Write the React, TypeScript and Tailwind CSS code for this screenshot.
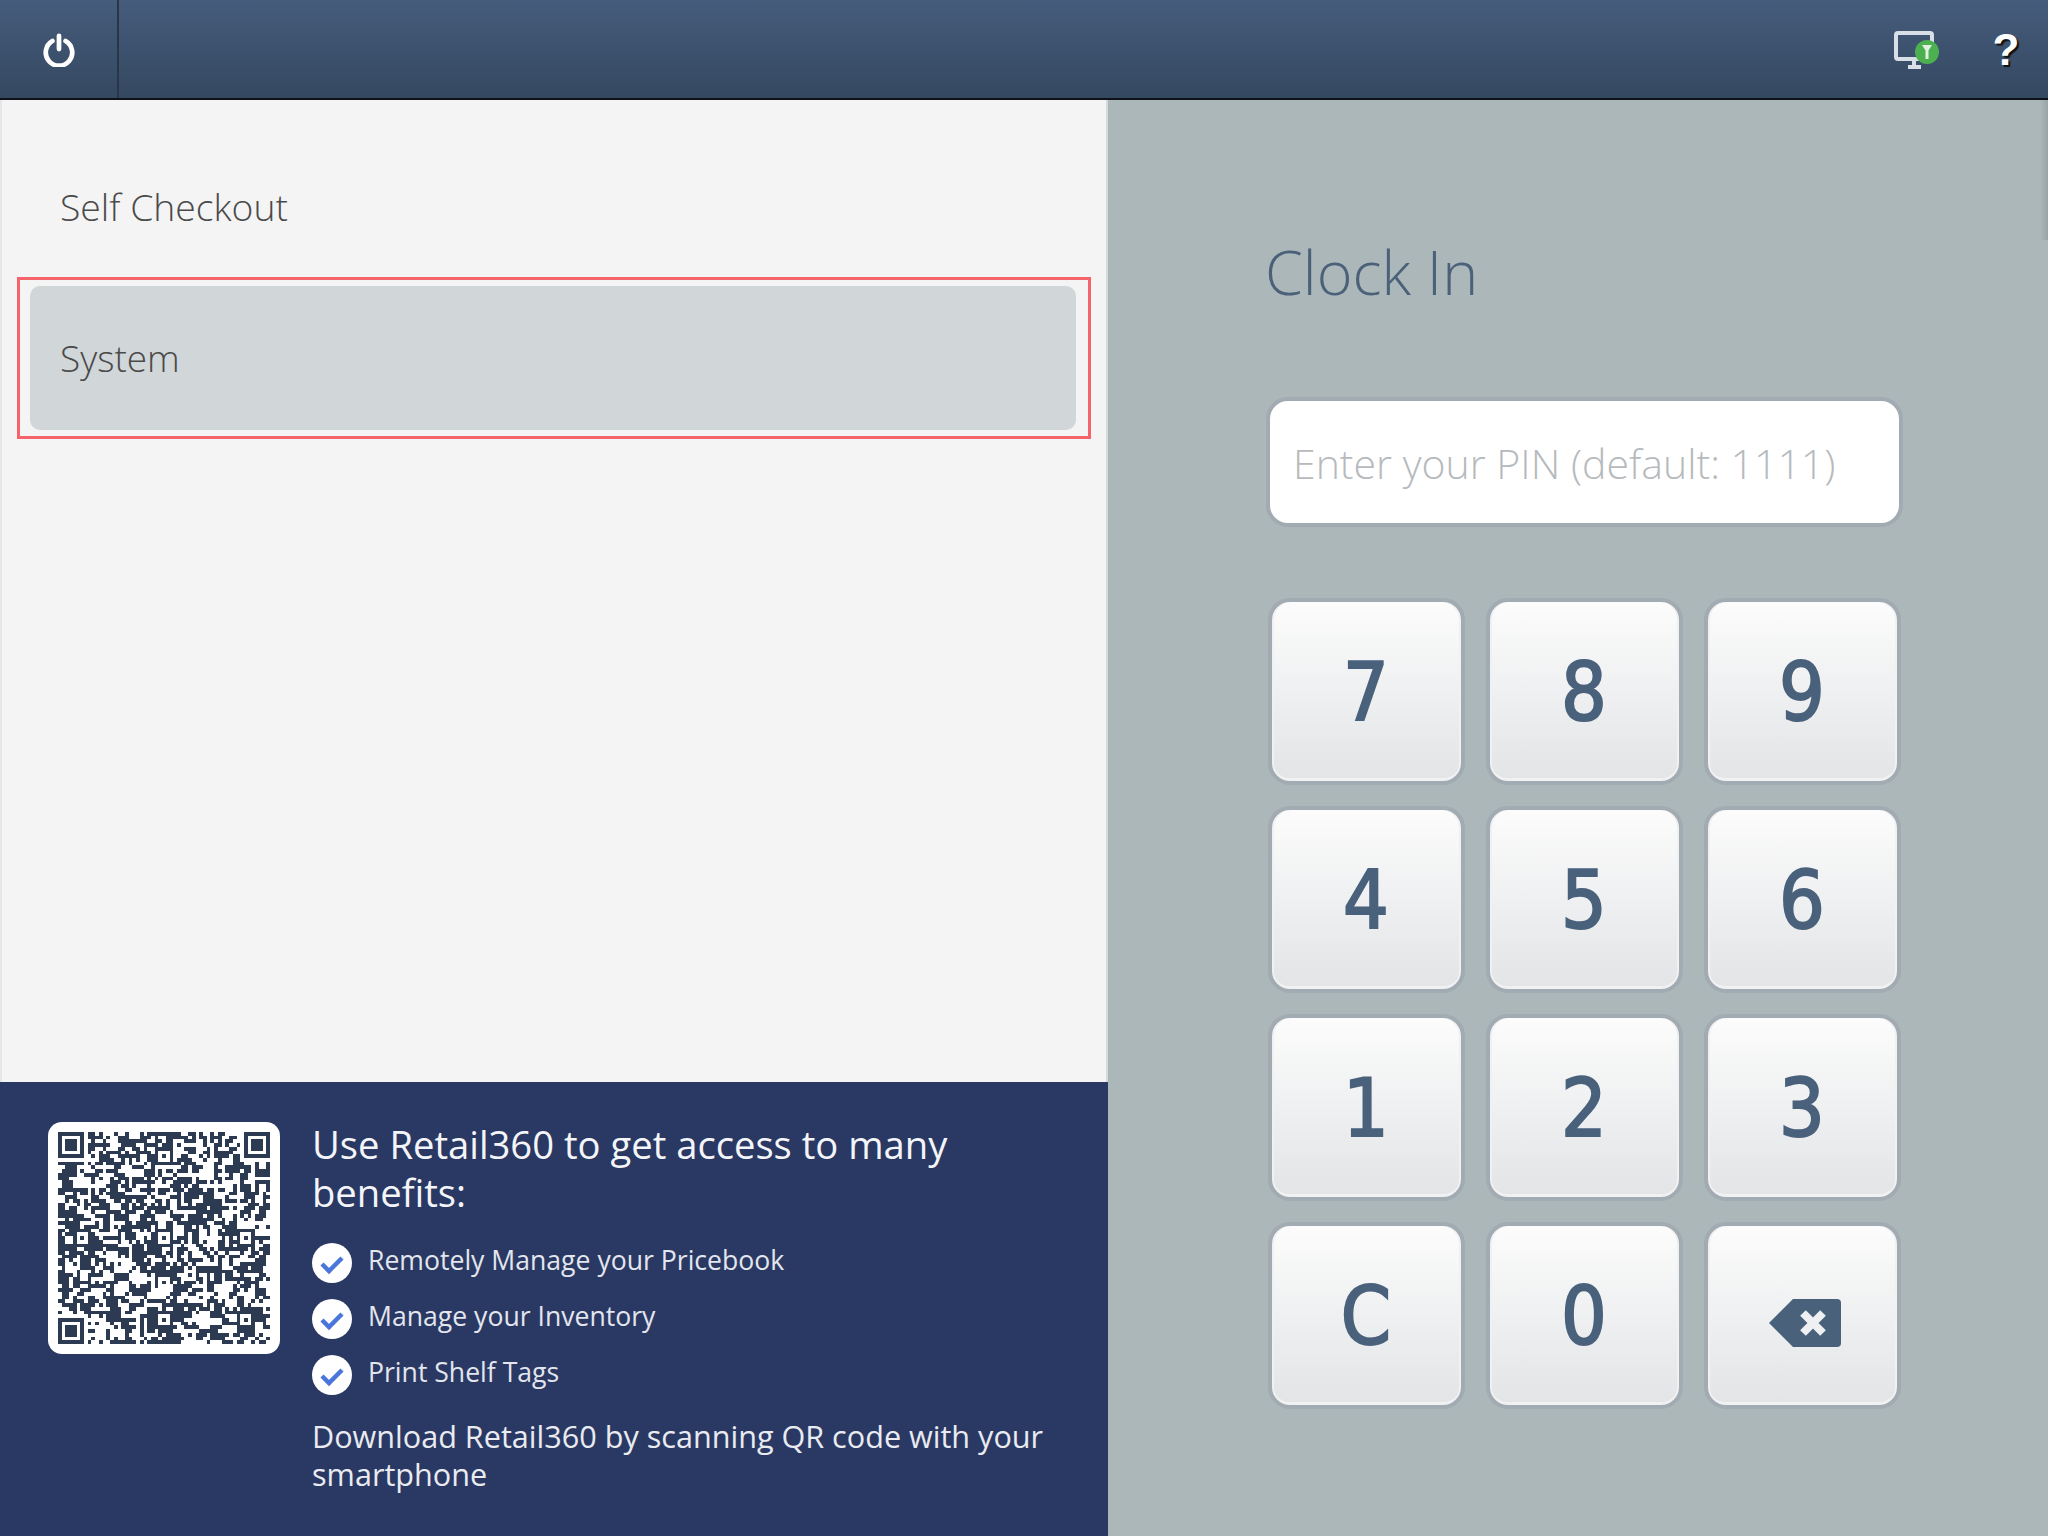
import React from "react";

const FONT = "font-['Open_Sans','Noto_Sans',sans-serif]";

function buildQr() {
  const n = 57;
  const g: number[][] = Array.from({ length: n }, () => Array(n).fill(0));
  let s = 12345;
  const rnd = () => {
    s = (s * 1103515245 + 12345) & 0x7fffffff;
    return (s >> 16) % 100;
  };
  for (let y = 0; y < n; y++)
    for (let x = 0; x < n; x++) {
      const r = rnd();
      if (r < 14 && x > 0) g[y][x] = g[y][x - 1];
      else if (r < 28 && y > 0) g[y][x] = g[y - 1][x];
      else g[y][x] = rnd() < 54 ? 1 : 0;
    }
  const finder = (ox: number, oy: number) => {
    for (let y = -1; y < 8; y++)
      for (let x = -1; x < 8; x++) {
        const yy = oy + y, xx = ox + x;
        if (yy < 0 || xx < 0 || yy >= n || xx >= n) continue;
        const inside = x >= 0 && x < 7 && y >= 0 && y < 7;
        const ring = x === 0 || x === 6 || y === 0 || y === 6;
        const core = x >= 2 && x <= 4 && y >= 2 && y <= 4;
        g[yy][xx] = inside && (ring || core) ? 1 : 0;
      }
  };
  finder(0, 0); finder(n - 7, 0); finder(0, n - 7);
  const align = (cx: number, cy: number) => {
    for (let y = -2; y <= 2; y++)
      for (let x = -2; x <= 2; x++)
        g[cy + y][cx + x] = Math.max(Math.abs(x), Math.abs(y)) !== 1 ? 1 : 0;
  };
  [[28, 6], [6, 28], [28, 28], [50, 28], [28, 50], [50, 50]].forEach(([x, y]) => align(x, y));
  let d = "";
  g.forEach((row, y) => row.forEach((v, x) => { if (v) d += `M${x} ${y}h1v1h-1z`; }));
  return d;
}
const qrPath = buildQr();

function Check() {
  return (
    <svg width="40" height="40" viewBox="0 0 40 40" className="shrink-0">
      <circle cx="20" cy="20" r="20" fill="#ffffff" />
      <path d="M10 21l7 7 13-13" fill="none" stroke="#4a76dc" strokeWidth="4.5" />
    </svg>
  );
}

function Key({ label, children }: { label?: string; children?: React.ReactNode }) {
  return (
    <div className="h-[187px] w-[197px] rounded-[22px] border-[4px] border-[#a2abb2] bg-gradient-to-b from-[#fcfcfc] to-[#e2e4e6] flex items-center justify-center shadow-[inset_0_-3px_0_#f0f1f2,inset_2px_0_0_#f0f1f2,inset_-2px_0_0_#f0f1f2]">
      {label ? (
        <span className="mt-[3px] -ml-[1px] text-[#4a617c] text-[80px] font-normal font-['DejaVu_Sans_Condensed','DejaVu_Sans',sans-serif] [-webkit-text-stroke:2px_#4a617c]">
          {label}
        </span>
      ) : (
        children
      )}
    </div>
  );
}

function Feature({ text }: { text: string }) {
  return (
    <div className="flex items-center gap-4 h-[40px] text-[26.6px] text-[#e3e6ee]">
      <Check />
      <span className="-mt-1">{text}</span>
    </div>
  );
}

export default function App() {
  return (
    <div className={`${FONT} relative w-[2048px] h-[1536px] overflow-hidden flex flex-col bg-[#f4f4f4]`}>
      <header className="h-[100px] shrink-0 flex items-stretch border-b-[2px] border-[#0d1219] bg-gradient-to-b from-[#465c7c] to-[#344860]">
        <div className="w-[119px] flex items-center justify-center border-r-[2px] border-[#2a3647]">
          <svg width="34" height="34" viewBox="0 0 36 36" fill="none" stroke="#ffffff" strokeWidth="5" strokeLinecap="round" className="ml-[1px] mt-[1px]">
            <path d="M11 8.5a14 14 0 1 0 14 0" />
            <path d="M18 3v14" />
          </svg>
        </div>
        <div className="flex-1" />
        <div className="flex items-center">
          <div className="relative w-[44px] h-[40px] mr-[54px] mt-[4px]">
            <svg width="44" height="40" viewBox="0 0 44 40" fill="none" stroke="#d9dfe6" strokeWidth="4">
              <rect x="2" y="2" width="36" height="26" rx="2" />
              <path d="M20 28v6M14 36h13" />
            </svg>
            <div className="absolute left-[21px] top-[9px] w-[24px] h-[24px] rounded-full bg-[#4cb050] flex items-center justify-center">
              <svg width="12" height="16" viewBox="0 0 12 16" fill="#dff3de">
                <path d="M1 1h10L7.5 6.5V15h-3V6.5z" />
              </svg>
            </div>
          </div>
          <div className="w-[28px] mr-[28px] text-white font-bold text-[44px] leading-none font-['Liberation_Sans',sans-serif] [text-shadow:2px_2px_1px_#111] text-center mt-[2px]">?</div>
        </div>
      </header>

      <div className="flex-1 flex min-h-0">
        <aside className="w-[1108px] shrink-0 flex flex-col border-r-[2px] border-[#d5dade] bg-[#f4f4f4]">
          <div className="flex-1 border-l-[2px] border-[#e4e7e8] pl-[15px]">
            <div className="h-[177px] flex items-end pl-[43px] pb-[42px] text-[37.3px] leading-[56px] font-light text-[#4a4a4a]">
              Self Checkout
            </div>
            <div className="w-[1074px] h-[162px] border-[3px] border-[#f4646a] pt-[6px] pb-[6px] pl-[10px] pr-[12px]">
              <div className="h-full rounded-[10px] bg-[#d1d6d9] flex items-center pl-[30px] text-[37px] font-light text-[#4a4a4a]">
                System
              </div>
            </div>
          </div>
          <div className="h-[454px] -mr-[2px] shrink-0 bg-[#2a3963] flex pl-[48px] pt-[40px]">
            <div className="w-[232px] h-[232px] rounded-[14px] bg-white flex items-center justify-center shrink-0">
              <svg width="212" height="212" viewBox="0 0 57 57" shapeRendering="crispEdges">
                <path d={qrPath} fill="#2c3b52" />
              </svg>
            </div>
            <div className="ml-[32px] flex-1 pr-[30px] text-white">
              <div className="text-[38.2px] leading-[48px] text-[#f4f5f8] mt-[-2px] mb-[27px] w-[720px]">
                Use Retail360 to get access to many benefits:
              </div>
              <div className="flex flex-col gap-[16px]">
                <Feature text="Remotely Manage your Pricebook" />
                <Feature text="Manage your Inventory" />
                <Feature text="Print Shelf Tags" />
              </div>
              <div className="mt-[22px] text-[30.6px] leading-[38px] text-[#e9ebf1]">
                Download Retail360 by scanning QR code with your smartphone
              </div>
            </div>
          </div>
        </aside>

        <main className="flex-1 bg-[#acb7b9] pl-[157px] pr-[140px] flex flex-col">
          <h1 className="mt-[134px] h-[76px] text-[61px] leading-[76px] font-light text-[#4b6079]">Clock In</h1>
          <div className="mt-[87px] ml-[1px] w-[637px] h-[130px] rounded-[22px] bg-white border-[4px] border-[#a2abb2] flex items-center pl-[23px] pt-[3px] text-[41px] font-light text-[#b6babd]">
            Enter your PIN (default: 1111)
          </div>
          <div className="mt-[71px] ml-[3px] grid grid-cols-[197px_197px_197px] auto-rows-[187px] gap-[21px] w-[633px]">
            {["7", "8", "9", "4", "5", "6", "1", "2", "3", "C", "0"].map((k) => (
              <Key key={k} label={k} />
            ))}
            <Key>
              <svg width="72" height="48" viewBox="0 0 72 48" className="mt-[14px] ml-[4px]">
                <path d="M24 0H68a4 4 0 0 1 4 4V44a4 4 0 0 1-4 4H24L0 24z" fill="#4a617c" />
                <path d="M34 14l20 20M54 14L34 34" stroke="#eef0f1" strokeWidth="8" fill="none" />
              </svg>
            </Key>
          </div>
        </main>
      </div>
      <div className="absolute right-0 top-[100px] w-[8px] h-[140px] bg-gradient-to-r from-transparent to-[#98a4a6]" />
    </div>
  );
}
